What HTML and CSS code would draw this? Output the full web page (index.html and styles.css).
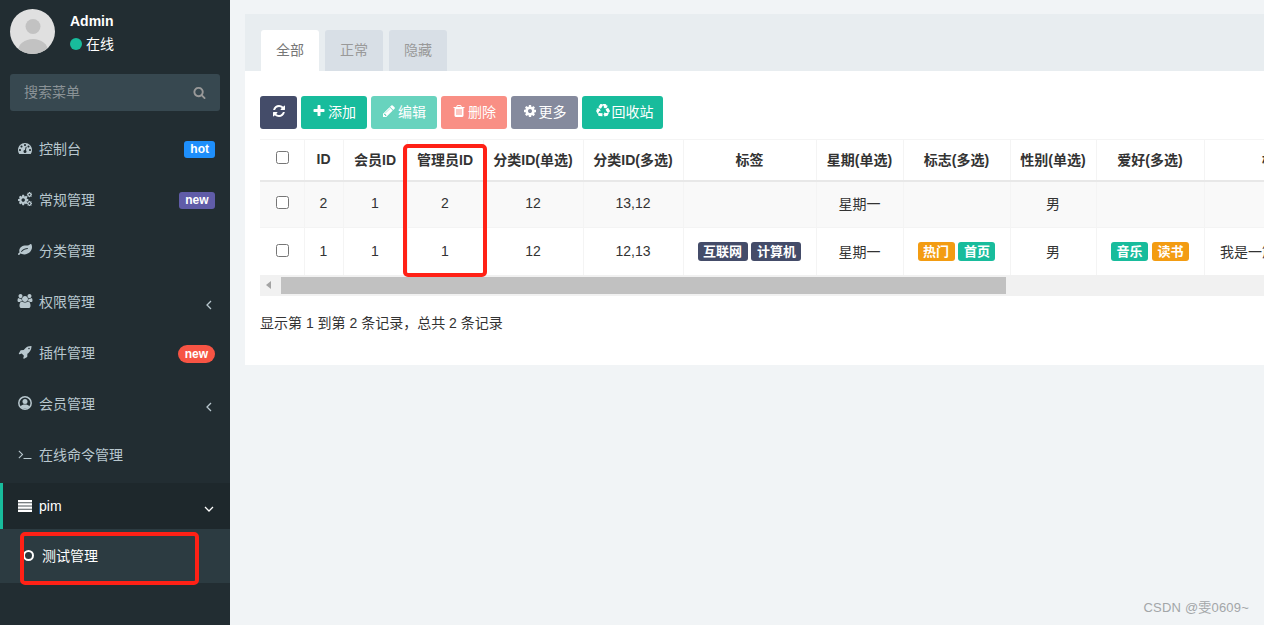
FILE: index.html
```html
<!DOCTYPE html>
<html lang="en">
<head>
    <meta charset="UTF-8">
    <meta name="viewport" content="width=device-width, initial-scale=1.0">
    <title>Admin - 测试管理</title>
    <link rel="stylesheet" href="styles.css">
</head>
<body>
    <svg class="sprite" xmlns="http://www.w3.org/2000/svg">
        <symbol id="i-search" viewBox="0 0 1792 1792"><path d="M1216 832q0-185-131.5-316.5t-316.5-131.5-316.5 131.5-131.5 316.5 131.5 316.5 316.5 131.5 316.5-131.5 131.5-316.5zm512 832q0 52-38 90t-90 38q-54 0-90-38l-343-342q-179 124-399 124-143 0-273.5-55.5t-225-150-150-225-55.5-273.5 55.5-273.5 150-225 225-150 273.5-55.5 273.5 55.5 225 150 150 225 55.5 273.5q0 220-124 399l343 343q37 37 37 90z"/></symbol>
        <symbol id="i-dash" viewBox="0 0 1792 1792"><path d="M384 1152q0-53-37.5-90.5t-90.5-37.5-90.5 37.5-37.5 90.5 37.5 90.5 90.5 37.5 90.5-37.5 37.5-90.5zm192-448q0-53-37.5-90.5t-90.5-37.5-90.5 37.5-37.5 90.5 37.5 90.5 90.5 37.5 90.5-37.5 37.5-90.5zm428 481l101-382q6-26-7.5-48.5t-38.5-29.5-48 6.5-30 39.5l-101 382q-60 5-107 43.5t-63 98.5q-20 77 20 146t117 89 146-20 89-117q16-60-6-117t-72-91zm660-33q0-53-37.5-90.5t-90.5-37.5-90.5 37.5-37.5 90.5 37.5 90.5 90.5 37.5 90.5-37.5 37.5-90.5zm-640-640q0-53-37.5-90.5t-90.5-37.5-90.5 37.5-37.5 90.5 37.5 90.5 90.5 37.5 90.5-37.5 37.5-90.5zm448 192q0-53-37.5-90.5t-90.5-37.5-90.5 37.5-37.5 90.5 37.5 90.5 90.5 37.5 90.5-37.5 37.5-90.5zm320 448q0 261-141 483-19 29-54 29h-1402q-35 0-54-29-141-221-141-483 0-182 71-348t191-286 286-191 348-71 348 71 286 191 191 286 71 348z"/></symbol>
        <symbol id="i-cog" viewBox="0 0 1792 1792"><path d="M1152 896q0-106-75-181t-181-75-181 75-75 181 75 181 181 75 181-75 75-181zm512-109v222q0 12-8 23t-20 13l-185 28q-19 54-39 91 35 50 107 138 10 12 10 25t-9 23q-27 37-99 108t-94 71q-12 0-26-9l-138-108q-44 23-91 38-16 136-29 186-7 28-36 28h-222q-14 0-24.5-8.5t-11.5-21.5l-28-184q-49-16-90-37l-141 107q-10 9-25 9-14 0-25-11-126-114-165-168-7-10-7-23 0-12 8-23 15-21 51-66.5t54-70.5q-27-50-41-99l-183-27q-13-2-21-12.5t-8-23.5v-222q0-12 8-23t19-13l186-28q14-46 39-92-40-57-107-138-10-12-10-24 0-10 9-23 26-36 98.5-107.5t94.5-71.5q13 0 26 10l138 107q44-23 91-38 16-136 29-186 7-28 36-28h222q14 0 24.5 8.5t11.5 21.5l28 184q49 16 90 37l142-107q9-9 24-9 13 0 25 10 129 119 165 170 7 8 7 22 0 12-8 23-15 21-51 66.5t-54 70.5q26 50 41 98l183 28q13 2 21 12.5t8 23.5z"/></symbol>
        <symbol id="i-leaf" viewBox="0 0 1792 1792"><path d="M1280 704q0-26-19-45t-45-19q-172 0-318 49.5t-259.5 134-235.5 219.5q-19 21-19 45 0 26 19 45t45 19q24 0 45-19 27-24 74-71t67-66q137-124 268.5-176t313.5-52q26 0 45-19t19-45zm512-198q0 95-20 193-46 224-184.5 383t-357.5 268q-214 108-438 108-148 0-286-47-15-5-88-42t-96-37q-16 0-39.5 32t-45 70-52.5 70-60 32q-30 0-51-11t-31-24-27-42q-2-4-6-11t-5.5-10-3-9.5-1.5-13.5q0-35 31-73.5t68-65.5 68-56 31-48q0-4-14-38t-16-44q-9-51-9-104 0-115 43.5-220t119-184.5 170.5-139 204-95.5q55-18 145-25.5t179.5-9 178.5-6 163.5-24 113.5-56.5l29.5-29.5 29.5-28 27-20 36.5-16 43.5-4.5q39 0 70.5 46t47.5 112 24 124 8 96z"/></symbol>
        <symbol id="i-users" viewBox="0 0 1920 1792"><path d="M593 896q-162 5-265 128h-134q-82 0-138-40.5t-56-118.5q0-353 124-353 6 0 43.5 21t97.5 42.5 119 21.5q67 0 133-23-5 37-5 66 0 139 81 256zm1071 637q0 120-73 189.5t-194 69.5h-874q-121 0-194-69.5t-73-189.5q0-53 3.5-103.5t14-109 26.5-108.5 43-97.5 62-81 85.5-53.5 111.5-20q10 0 43 21.5t73 48 107 48 135 21.5 135-21.5 107-48 73-48 43-21.5q61 0 111.5 20t85.5 53.5 62 81 43 97.5 26.5 108.5 14 109 3.5 103.5zm-1024-1277q0 106-75 181t-181 75-181-75-75-181 75-181 181-75 181 75 75 181zm704 384q0 159-112.5 271.5t-271.5 112.5-271.5-112.5-112.5-271.5 112.5-271.5 271.5-112.5 271.5 112.5 112.5 271.5zm576 225q0 78-56 118.5t-138 40.5h-134q-103-123-265-128 81-117 81-256 0-29-5-66 66 23 133 23 59 0 119-21.5t97.5-42.5 43.5-21q124 0 124 353zm-128-609q0 106-75 181t-181 75-181-75-75-181 75-181 181-75 181 75 75 181z"/></symbol>
        <symbol id="i-rocket" viewBox="0 0 1792 1792"><path d="M1504 448q0-40-28-68t-68-28-68 28-28 68 28 68 68 28 68-28 28-68zm224-288q0 249-75.5 430.5t-253.5 360.5q-81 80-195 176l-20 379q-2 16-16 26l-384 224q-7 4-16 4-12 0-23-9l-64-64q-13-14-8-32l85-276-281-281-276 85q-3 1-9 1-14 0-23-9l-64-64q-17-19-5-39l224-384q10-14 26-16l379-20q96-114 176-195 188-187 358-258t431-71q14 0 24 9.5t10 22.5z"/></symbol>
        <symbol id="i-terminal" viewBox="0 0 1792 1792"><path d="M649 983l-466 466q-10 10-23 10t-23-10l-50-50q-10-10-10-23t10-23l393-393-393-393q-10-10-10-23t10-23l50-50q10-10 23-10t23 10l466 466q10 10 10 23t-10 23zm1079 457v64q0 14-9 23t-23 9h-960q-14 0-23-9t-9-23v-64q0-14 9-23t23-9h960q14 0 23 9t9 23z"/></symbol>
        <symbol id="i-refresh" viewBox="0 0 1792 1792"><path d="M1639 1056q0 5-1 7-64 268-268 434.5t-478 166.5q-146 0-282.5-55t-243.5-157l-129 129q-19 19-45 19t-45-19-19-45v-448q0-26 19-45t45-19h448q26 0 45 19t19 45-19 45l-137 137q71 66 161 102t187 36q134 0 250-65t186-179q11-17 53-117 8-23 30-23h192q13 0 22.5 9.5t9.5 22.5zm25-800v448q0 26-19 45t-45 19h-448q-26 0-45-19t-19-45 19-45l138-138q-148-137-349-137-134 0-250 65t-186 179q-11 17-53 117-8 23-30 23h-199q-13 0-22.5-9.5t-9.5-22.5v-7q65-268 270-434.5t480-166.5q146 0 284 55.5t245 156.5l130-129q19-19 45-19t45 19 19 45z"/></symbol>
        <symbol id="i-plus" viewBox="0 0 1792 1792"><path d="M1600 736v192q0 40-28 68t-68 28h-416v416q0 40-28 68t-68 28h-192q-40 0-68-28t-28-68v-416h-416q-40 0-68-28t-28-68v-192q0-40 28-68t68-28h416v-416q0-40 28-68t68-28h192q40 0 68 28t28 68v416h416q40 0 68 28t28 68z"/></symbol>
        <symbol id="i-pencil" viewBox="0 0 1792 1792"><path d="M491 1536l91-91-235-235-91 91v107h128v128h107zm523-928q0-22-22-22-10 0-17 7l-542 542q-7 7-7 17 0 22 22 22 10 0 17-7l542-542q7-7 7-17zm-54-192l416 416-832 832h-416v-416zm683 96q0 53-37 90l-166 166-416-416 166-165q36-38 90-38 53 0 91 38l235 234q37 39 37 91z"/></symbol>
        <symbol id="i-trash" viewBox="0 0 1792 1792"><path d="M704 1376v-704q0-14-9-23t-23-9h-64q-14 0-23 9t-9 23v704q0 14 9 23t23 9h64q14 0 23-9t9-23zm256 0v-704q0-14-9-23t-23-9h-64q-14 0-23 9t-9 23v704q0 14 9 23t23 9h64q14 0 23-9t9-23zm256 0v-704q0-14-9-23t-23-9h-64q-14 0-23 9t-9 23v704q0 14 9 23t23 9h64q14 0 23-9t9-23zm-544-992h448l-48-117q-7-9-17-11h-317q-10 2-17 11zm928 32v64q0 14-9 23t-23 9h-96v948q0 83-47 143.5t-113 60.5h-832q-66 0-113-58.5t-47-141.5v-952h-96q-14 0-23-9t-9-23v-64q0-14 9-23t23-9h309l70-167q15-37 54-63t79-26h320q40 0 79 26t54 63l70 167h309q14 0 23 9t9 23z"/></symbol>
        <symbol id="i-recycle" viewBox="0 0 1792 1792"><path d="M836 1169l-15 368-2 22-420-29q-36-3-67-31.5t-47-65.5q-11-27-14.5-55t4-65 12-55 21.5-64 19-53q78 12 509 28zm-387-586l180 379-147-92q-63 72-111.5 144.5t-72.5 125-39.5 94.5-18.5 63l-4 21-190-357q-17-26-18-56t6-47l8-18q35-63 114-188l-140-86zm1231 517l-188 359q-12 29-36.5 46.5t-43.5 20.5l-18 4q-71 7-219 12l8 164-230-367 211-362 7 173q170 16 283 5t170-33zm-785-924q-47 63-265 435l-317-187-19-12 225-356q20-31 60-45t80-10q24 2 48.5 12t42 21 41.5 33 36 34.5 36 39.5 32 35zm655 307l212 363q18 37 12.5 76t-27.5 74q-13 20-33 37t-38 28-48.5 22-47 16-51.5 14-46 12q-34-72-265-436l313-195zm-143-226l142-83-220 373-419-20 151-86q-34-89-75-166t-75.5-123.5-64.5-80-47-46.5l-17-13 405 1q31-3 58 10.5t39 28.5l11 15q39 61 112 190z"/></symbol>
    </svg>

    <div class="app">
        <aside class="sidebar">
            <div class="user-panel">
                <svg class="avatar" viewBox="0 0 45 45">
                    <defs><clipPath id="avatar-clip"><circle cx="22.5" cy="22.5" r="22.5"/></clipPath></defs>
                    <circle cx="22.5" cy="22.5" r="22.5" fill="#e0e0e0"/>
                    <circle cx="23" cy="17.5" r="7.5" fill="#c2c2c2"/>
                    <ellipse cx="23" cy="42" rx="15" ry="12" fill="#c2c2c2" clip-path="url(#avatar-clip)"/>
                </svg>
                <div class="user-info">
                    <div class="user-name">Admin</div>
                    <div class="user-status"><span class="dot"></span>在线</div>
                </div>
            </div>

            <div class="menu-search">
                <span class="search-text">搜索菜单</span>
                <svg class="search-icon"><use href="#i-search"/></svg>
            </div>

            <ul class="menu">
                <li class="menu-item">
                    <svg class="icon"><use href="#i-dash"/></svg>
                    <span>控制台</span>
                    <span class="badge badge-blue">hot</span>
                </li>
                <li class="menu-item">
                    <svg class="icon" viewBox="0 0 14 14">
                        <use href="#i-cog" x="-0.8" y="2" width="12" height="12"/>
                        <use href="#i-cog" x="8.4" y="-0.4" width="6.2" height="6.2"/>
                        <use href="#i-cog" x="8.4" y="8.4" width="6.2" height="6.2"/>
                    </svg>
                    <span>常规管理</span>
                    <span class="badge badge-purple">new</span>
                </li>
                <li class="menu-item">
                    <svg class="icon"><use href="#i-leaf"/></svg>
                    <span>分类管理</span>
                </li>
                <li class="menu-item">
                    <svg class="icon icon-wide"><use href="#i-users"/></svg>
                    <span>权限管理</span>
                    <svg class="chev" viewBox="0 0 6 10"><path d="M5 1L1 5l4 4"/></svg>
                </li>
                <li class="menu-item">
                    <svg class="icon"><use href="#i-rocket"/></svg>
                    <span>插件管理</span>
                    <span class="badge badge-red">new</span>
                </li>
                <li class="menu-item">
                    <svg class="icon" viewBox="0 0 14 14">
                        <circle cx="7" cy="7" r="6.2" class="ring"/>
                        <circle cx="7" cy="5.4" r="2.5"/>
                        <path d="M2.6 10.6C3.4 8.8 5 8.4 7 8.4s3.6.4 4.4 2.2C10.4 12 8.8 12.6 7 12.6s-3.4-.6-4.4-2z"/>
                    </svg>
                    <span>会员管理</span>
                    <svg class="chev" viewBox="0 0 6 10"><path d="M5 1L1 5l4 4"/></svg>
                </li>
                <li class="menu-item">
                    <svg class="icon"><use href="#i-terminal"/></svg>
                    <span>在线命令管理</span>
                </li>
                <li class="menu-group">
                    <div class="menu-item active">
                        <svg class="icon" viewBox="0 0 14 12">
                            <rect y="0" width="14" height="2.4"/>
                            <rect y="3.2" width="14" height="2.4"/>
                            <rect y="6.4" width="14" height="2.4"/>
                            <rect y="9.6" width="14" height="2.4"/>
                        </svg>
                        <span>pim</span>
                        <svg class="chev chev-down" viewBox="0 0 10 6"><path d="M1 1l4 4 4-4"/></svg>
                    </div>
                    <div class="submenu-item"><span class="ring-icon"></span>测试管理</div>
                </li>
            </ul>
        </aside>

        <main class="content">
            <div class="panel">
                <div class="tabs">
                    <div class="tab current">全部</div>
                    <div class="tab">正常</div>
                    <div class="tab">隐藏</div>
                </div>
                <div class="panel-body">
                    <div class="toolbar">
                        <button class="btn btn-dark btn-refresh"><svg class="btn-icon"><use href="#i-refresh"/></svg></button>
                        <button class="btn btn-green"><svg class="btn-icon"><use href="#i-plus"/></svg>添加</button>
                        <button class="btn btn-green faded"><svg class="btn-icon"><use href="#i-pencil"/></svg>编辑</button>
                        <button class="btn btn-red faded"><svg class="btn-icon"><use href="#i-trash"/></svg>删除</button>
                        <button class="btn btn-dark faded btn-more"><svg class="btn-icon"><use href="#i-cog"/></svg>更多</button>
                        <button class="btn btn-green btn-recycle"><svg class="btn-icon"><use href="#i-recycle"/></svg>回收站</button>
                    </div>

                    <div class="table-wrap">
                        <table class="data-table">
                            <colgroup>
                                <col class="c-check"><col class="c-id"><col class="c-member"><col class="c-admin">
                                <col class="c-cat"><col class="c-cat"><col class="c-tags"><col class="c-week">
                                <col class="c-flag"><col class="c-week2"><col class="c-hobby"><col class="c-desc">
                            </colgroup>
                            <thead>
                                <tr>
                                    <th><input type="checkbox"></th>
                                    <th>ID</th>
                                    <th>会员ID</th>
                                    <th>管理员ID</th>
                                    <th>分类ID(单选)</th>
                                    <th>分类ID(多选)</th>
                                    <th>标签</th>
                                    <th>星期(单选)</th>
                                    <th>标志(多选)</th>
                                    <th>性别(单选)</th>
                                    <th>爱好(多选)</th>
                                    <th>标题描述内容</th>
                                </tr>
                            </thead>
                            <tbody>
                                <tr class="odd">
                                    <td><input type="checkbox"></td>
                                    <td>2</td>
                                    <td>1</td>
                                    <td>2</td>
                                    <td>12</td>
                                    <td>13,12</td>
                                    <td></td>
                                    <td>星期一</td>
                                    <td></td>
                                    <td>男</td>
                                    <td></td>
                                    <td></td>
                                </tr>
                                <tr>
                                    <td><input type="checkbox"></td>
                                    <td>1</td>
                                    <td>1</td>
                                    <td>1</td>
                                    <td>12</td>
                                    <td>12,13</td>
                                    <td><span class="label label-dark">互联网</span> <span class="label label-dark">计算机</span></td>
                                    <td>星期一</td>
                                    <td><span class="label label-orange">热门</span> <span class="label label-green">首页</span></td>
                                    <td>男</td>
                                    <td><span class="label label-green">音乐</span> <span class="label label-orange">读书</span></td>
                                    <td>我是一篇测试文章描述内容</td>
                                </tr>
                            </tbody>
                        </table>
                    </div>
                    <div class="hscroll">
                        <span class="hscroll-arrow"></span>
                        <span class="hscroll-thumb"></span>
                    </div>

                    <div class="pagination-info">显示第 1 到第 2 条记录，总共 2 条记录</div>
                </div>
            </div>
        </main>
    </div>

    <!-- red marks drawn over the screenshot -->
    <div class="mark mark-menu"></div>
    <div class="mark mark-column"></div>
    <div class="watermark">CSDN @雯0609~</div>
</body>
</html>
```

FILE: styles.css
```css
* {
    box-sizing: border-box;
}

html, body {
    height: 100%;
}

body {
    margin: 0;
    overflow: hidden;
    position: relative;
    font-family: "Liberation Sans", "Noto Sans CJK SC", sans-serif;
    font-size: 14px;
    color: #333;
    background-color: #f1f4f6;
}

.sprite {
    position: absolute;
    width: 0;
    height: 0;
}

.app {
    display: flex;
    height: 100%;
}

/* sidebar */
.sidebar {
    flex: 0 0 230px;
    background-color: #222d32;
    color: #b8c7ce;
}

.user-panel {
    display: flex;
    gap: 15px;
    padding: 9px 10px 0;
    height: 74px;
}

.avatar {
    width: 45px;
    height: 45px;
}

.user-name {
    margin-top: 3px;
    font-weight: bold;
    color: #fff;
    line-height: 18px;
}

.user-status {
    display: flex;
    align-items: center;
    gap: 4px;
    margin-top: 5px;
    color: #fff;
    line-height: 18px;
}

.dot {
    width: 12px;
    height: 12px;
    border-radius: 50%;
    background-color: #18bc9c;
}

.menu-search {
    display: flex;
    justify-content: space-between;
    align-items: center;
    height: 37px;
    margin: 0 10px;
    padding: 0 14px;
    background-color: #374850;
    border-radius: 3px;
    color: #8a9296;
}

.search-text {
    margin-bottom: 4px;
}

.search-icon {
    width: 13px;
    height: 13px;
    fill: #999;
}

.menu {
    list-style: none;
    display: flex;
    flex-direction: column;
    gap: 5px;
    margin: 15px 0 0;
    padding: 0;
}

.menu-item {
    display: flex;
    align-items: center;
    height: 46px;
    padding: 0 15px 2px 18px;
}

.icon {
    flex: none;
    width: 14px;
    height: 14px;
    margin-right: 7px;
    fill: #b8c7ce;
}

.icon-wide {
    width: 16px;
    margin-left: -1px;
    margin-right: 6px;
}

.icon .ring {
    fill: none;
    stroke: #b8c7ce;
    stroke-width: 1.5;
}

.badge {
    margin-left: auto;
    margin-top: 3px;
    padding: 0 6px;
    border-radius: 3px;
    font-size: 12px;
    font-weight: bold;
    line-height: 17px;
    color: #fff;
}

.badge-blue {
    background-color: #1e8ffc;
}

.badge-purple {
    background-color: #605ca8;
    padding: 0 6.5px;
}

.badge-red {
    background-color: #f75444;
    border-radius: 9px;
    padding: 0 7px;
    line-height: 18px;
}

.chev {
    margin-left: auto;
    margin-right: 3px;
    margin-top: 8px;
    width: 6px;
    height: 10px;
    fill: none;
    stroke: #b8c7ce;
    stroke-width: 1.3;
}

.chev-down {
    width: 10px;
    height: 6px;
    margin-right: 1px;
    margin-top: 6px;
    stroke: #fff;
}

.menu-item.active {
    background-color: #1e282c;
    border-left: 3px solid #18bc9c;
    padding-left: 15px;
    padding-bottom: 0;
    color: #fff;
}

.menu-item.active .icon {
    fill: #fff;
}

.submenu-item {
    display: flex;
    align-items: center;
    height: 54px;
    padding: 0 0 2px 23px;
    background-color: #2c3b41;
    color: #fff;
}

.ring-icon {
    width: 11px;
    height: 11px;
    margin-right: 8px;
    border: 2.5px solid #fff;
    border-radius: 50%;
}

/* main panel */
.content {
    flex: 1;
    min-width: 0;
    padding: 14px 0 0 15px;
}

.panel {
    background-color: #fff;
    height: 351px;
}

.tabs {
    display: flex;
    gap: 6px;
    height: 57px;
    padding: 16px 0 0 16px;
    background-color: #e8edf0;
}

.tab {
    width: 58px;
    height: 41px;
    border-radius: 3px 3px 0 0;
    background-color: #d8dfe6;
    color: #999;
    text-align: center;
    line-height: 41px;
}

.tab.current {
    background-color: #fff;
    color: #777;
}

.panel-body {
    padding: 25px 0 0 15px;
}

.toolbar {
    display: flex;
    gap: 4px;
    margin-bottom: 10px;
}

.btn {
    display: flex;
    align-items: center;
    justify-content: center;
    gap: 2px;
    height: 33px;
    width: 66px;
    padding: 0 0 4px;
    border: none;
    border-radius: 3px;
    color: #fff;
    font-family: inherit;
    font-size: 14px;
}

.btn-refresh {
    width: 37px;
}

.btn-more {
    width: 67px;
}

.btn-recycle {
    width: 81px;
    padding-left: 4px;
}

.btn-icon {
    width: 14px;
    height: 14px;
    fill: #fff;
}

.btn-dark {
    background-color: #444c69;
}

.btn-green {
    background-color: #18bc9c;
}

.btn-red {
    background-color: #f75444;
}

.faded {
    opacity: .65;
}

.table-wrap {
    overflow: hidden;
}

.data-table {
    table-layout: fixed;
    border-collapse: collapse;
    width: 1144px;
}

.c-check { width: 44px; }
.c-id { width: 39px; }
.c-member { width: 64px; }
.c-admin { width: 76px; }
.c-cat { width: 100px; }
.c-tags { width: 133px; }
.c-week { width: 87px; }
.c-flag { width: 107px; }
.c-week2 { width: 86px; }
.c-hobby { width: 108px; }
.c-desc { width: 200px; }

.data-table th, .data-table td {
    padding: 0;
    border: 1px solid #f4f4f4;
    text-align: center;
    white-space: nowrap;
}

.data-table th:first-child, .data-table td:first-child {
    border-left: none;
}

.data-table th {
    height: 41px;
    padding-bottom: 2px;
    border-bottom: 2px solid #e8e8e8;
    font-weight: bold;
}

.data-table td {
    height: 47px;
}

.data-table .odd td {
    padding-bottom: 2px;
}

.data-table tbody tr:last-child td {
    border-bottom: none;
}

.odd {
    background-color: #f9f9f9;
}

.data-table input {
    width: 13px;
    height: 13px;
    margin: 0 0 3px 1px;
    vertical-align: middle;
}

.label {
    display: inline-block;
    padding: 0 5.5px;
    border-radius: 3px;
    color: #fff;
    font-size: 13px;
    font-weight: bold;
    line-height: 19px;
}

.label-dark {
    background-color: #444c69;
}

.label-orange {
    background-color: #f39c12;
}

.label-green {
    background-color: #18bc9c;
}

/* the table scrollbar */
.hscroll {
    display: flex;
    align-items: center;
    height: 21px;
    background-color: #f1f1f1;
}

.hscroll-arrow {
    width: 0;
    height: 0;
    margin-left: 6px;
    margin-right: 10px;
    border-style: solid;
    border-width: 4px 5px 4px 0;
    border-color: transparent #a3a3a3 transparent transparent;
}

.hscroll-thumb {
    width: 725px;
    height: 17px;
    background-color: #c1c1c1;
}

.pagination-info {
    margin-top: 17px;
    line-height: 20px;
}

/* annotations */
.mark {
    position: absolute;
    border: 4px solid #ff2116;
    border-radius: 5px;
}

.mark-menu {
    left: 20px;
    top: 532px;
    width: 179px;
    height: 53px;
}

.mark-column {
    left: 403px;
    top: 144px;
    width: 84px;
    height: 133px;
}

.watermark {
    position: absolute;
    right: 15px;
    bottom: 9px;
    color: #a3a6a8;
    font-size: 13px;
    letter-spacing: .2px;
}
```
